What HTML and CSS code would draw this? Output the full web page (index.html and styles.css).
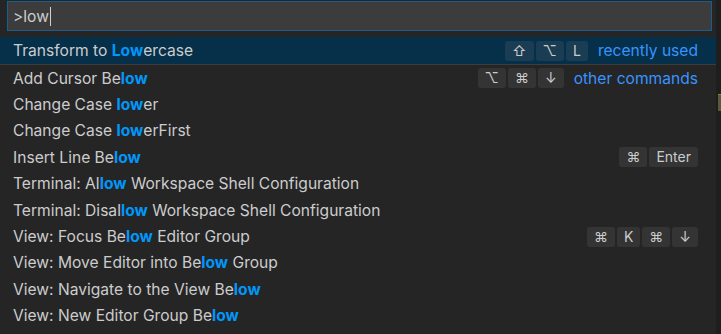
FILE: index.html
```html
<!DOCTYPE html>
<html>
<head>
<meta charset="utf-8">
<link rel="stylesheet" href="styles.css">
</head>
<body>
<div class="screen">
  <div class="widget">
    <div class="input-wrap">
      <div class="input"><span class="query">&gt;low</span><span class="caret"></span></div>
    </div>
    <div class="list">
      <div class="row selected">
        <span class="label">Transform to <b>Low</b>ercase</span>
        <span class="keys"><kbd>⇧</kbd><kbd>⌥</kbd><kbd>L</kbd></span>
        <span class="group">recently used</span>
      </div>
      <div class="row">
        <span class="label">Add Cursor Be<b>low</b></span>
        <span class="keys"><kbd>⌥</kbd><kbd>⌘</kbd><kbd>↓</kbd></span>
        <span class="group">other commands</span>
      </div>
      <div class="row"><span class="label">Change Case <b>low</b>er</span></div>
      <div class="row"><span class="label">Change Case <b>low</b>erFirst</span></div>
      <div class="row">
        <span class="label">Insert Line Be<b>low</b></span>
        <span class="keys"><kbd>⌘</kbd><kbd>Enter</kbd></span>
      </div>
      <div class="row"><span class="label">Terminal: Al<b>low</b> Workspace Shell Configuration</span></div>
      <div class="row"><span class="label">Terminal: Disal<b>low</b> Workspace Shell Configuration</span></div>
      <div class="row">
        <span class="label">View: Focus Be<b>low</b> Editor Group</span>
        <span class="keys"><kbd>⌘</kbd><kbd>K</kbd><kbd>⌘</kbd><kbd>↓</kbd></span>
      </div>
      <div class="row"><span class="label">View: Move Editor into Be<b>low</b> Group</span></div>
      <div class="row"><span class="label">View: Navigate to the View Be<b>low</b></span></div>
      <div class="row"><span class="label">View: New Editor Group Be<b>low</b></span></div>
    </div>
  </div>
  <div class="editor-edge"><div class="edge-mark"></div></div>
</div>
</body>
</html>
```
FILE: styles.css
```css
html, body {
  margin: 0;
  padding: 0;
  background: #1e1e1e;
}
.screen {
  display: flex;
  width: 721px;
  height: 334px;
  overflow: hidden;
  font-family: "Inter", "Liberation Sans", sans-serif;
}
.widget {
  width: 716px;
  height: 334px;
  background: #252526;
  display: flex;
  flex-direction: column;
}
.editor-edge {
  flex: 1;
  background: #1e1e1e;
}
.edge-mark {
  margin: 94px 0 0 2px;
  height: 16px;
  background: #5a5a3a;
  border-top: 1px solid #6f8a3a;
}
.input-wrap {
  padding: 1px 4px 6px 7px;
}
.input {
  height: 28px;
  border: 1px solid #1a5e8e;
  background: #3c3c3c;
  display: flex;
  align-items: center;
  padding-left: 5px;
  color: #cccccc;
  font-size: 15.6px;
}
.caret {
  width: 1px;
  height: 19px;
  background: #d0d0d0;
  margin-left: 1px;
}
.row {
  height: 26.4px;
  display: flex;
  align-items: center;
  padding: 0 18px 0 13px;
  color: #cccccc;
  font-size: 15.6px;
  white-space: nowrap;
}
.row.selected {
  background: #062f4a;
  height: 27px;
  border-bottom: 1px solid #3c3c3c;
}
.label {
  flex: 1;
}
.label b {
  color: #0097fb;
  font-weight: 700;
}
.keys {
  display: flex;
  gap: 2px;
}
kbd {
  font-family: "Inter", "DejaVu Sans", sans-serif;
  font-size: 14px;
  height: 20px;
  line-height: 20px;
  min-width: 8px;
  text-align: center;
  padding: 0 7px;
  border-radius: 3px;
  background: rgba(128, 128, 128, 0.17);
  color: #cccccc;
}
.group {
  color: #3794ff;
  margin-left: 10px;
}
```
